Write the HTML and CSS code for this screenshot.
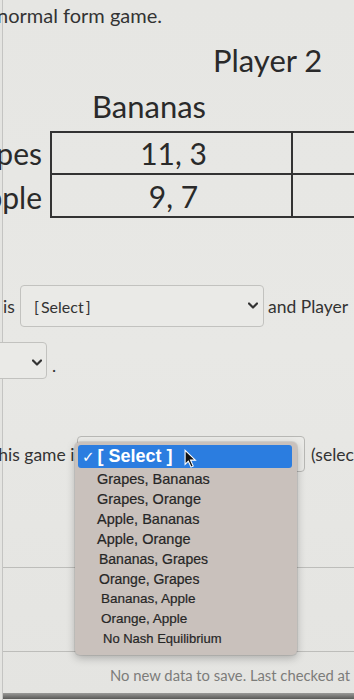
FILE: index.html
```html
<!DOCTYPE html>
<html>
<head>
<meta charset="utf-8">
<link rel="stylesheet" href="styles.css">
</head>
<body>
<div class="page">
  <p class="intro">normal form game.</p>
  <div class="player2">Player 2</div>
  <div class="colhead">Bananas</div>
  <div class="matrix">
    <div class="rlabel">Grapes</div>
    <div class="cell c1 top">11, 3</div>
    <div class="cell c2 top"></div>
    <div class="rlabel">Apple</div>
    <div class="cell c1">9, 7</div>
    <div class="cell c2"></div>
  </div>

  <div class="qrow q1">
    <span class="qtext">is</span>
    <div class="sel wide"><span>[ Select ]</span><svg class="chev" viewBox="0 0 10 6"><path d="M1 1 L5 5 L9 1" /></svg></div>
    <span class="qtext">and Player</span>
  </div>
  <div class="qrow q2">
    <div class="sel small"><svg class="chev" viewBox="0 0 10 6"><path d="M1 1 L5 5 L9 1" /></svg></div>
    <span class="qtext dot">.</span>
  </div>
  <div class="qrow q3">
    <span class="qtext clip">this game is</span>
    <div class="sel third">
      <div class="menu">
        <div class="hl"><span class="check">✓</span>[ Select ]</div>
        <ul class="opts">
          <li>Grapes, Bananas</li>
          <li>Grapes, Orange</li>
          <li>Apple, Bananas</li>
          <li>Apple, Orange</li>
          <li>Bananas, Grapes</li>
          <li>Orange, Grapes</li>
          <li>Bananas, Apple</li>
          <li>Orange, Apple</li>
          <li>No Nash Equilibrium</li>
        </ul>
        <svg class="cursor" viewBox="0 0 12 18"><path d="M1 1 L1 14 L4 11 L6.5 16.5 L8.5 15.5 L6 10 L10.5 10 Z" /></svg>
      </div>
    </div>
    <span class="qtext">(select</span>
  </div>
  <div class="rule r1"></div>
  <div class="rule r2"></div>
  <div class="status">No new data to save. Last checked at</div>
  <div class="bottomband"></div>
</div>
</body>
</html>
```
FILE: styles.css
```css
html, body {
  margin: 0;
  padding: 0;
}
body {
  width: 354px;
  height: 700px;
  overflow: hidden;
  background: #e4e4e1;
  font-family: Lato, "Open Sans", sans-serif;
  color: #2f2f2f;
}
.page {
  position: relative;
  height: 700px;
  border-left: 1px solid #c4c4c2;
  margin-left: 2px;
  background: linear-gradient(180deg, #e6e6e3 0%, #e8e8e5 50%, #e4e4e1 100%);
}
.intro {
  margin: 0;
  padding-top: 2px;
  height: 26px;
  line-height: 26px;
  font-size: 20px;
  margin-left: -6px;
  color: #333;
}
.player2 {
  margin-top: 14px;
  padding-left: 210px;
  height: 36px;
  line-height: 36px;
  font-size: 31px;
  color: #2a2a2a;
}
.colhead {
  margin-top: 10px;
  padding-left: 89px;
  height: 36px;
  line-height: 36px;
  font-size: 31px;
  color: #2a2a2a;
}
.matrix {
  margin-top: 7px;
  display: grid;
  grid-template-columns: 47px 241px 120px;
  grid-template-rows: 44px 43px;
}
.rlabel {
  display: flex;
  justify-content: flex-end;
  align-items: center;
  padding-right: 8px;
  font-size: 30px;
  white-space: nowrap;
  color: #2a2a2a;
  line-height: 1;
}
.cell {
  display: flex;
  align-items: center;
  justify-content: center;
  font-size: 30px;
  color: #2a2a2a;
  border-bottom: 2px solid #333;
  border-left: 2px solid #333;
}
.cell.top {
  border-top: 2px solid #333;
}
.c1 {
  padding-left: 4px;
}
.qrow {
  display: flex;
  align-items: center;
  white-space: nowrap;
}
.qtext {
  font-size: 17.5px;
  color: #333;
}
.q1 {
  margin-top: 67px;
  height: 42px;
}
.q1 .qtext:first-child {
  width: 17px;
}
.q1 .qtext:last-child {
  margin-left: 4px;
}
.sel {
  box-sizing: border-box;
  position: relative;
  border: 1px solid #c2c2bf;
  border-radius: 4px;
  background: #eaeae7;
  display: flex;
  align-items: center;
  flex-shrink: 0;
}
.sel.wide {
  width: 244px;
  height: 42px;
  padding-left: 13px;
  font-size: 16px;
  color: #333;
  word-spacing: -2px;
}
.chev {
  position: absolute;
  width: 10px;
  height: 7px;
  fill: none;
  stroke: #333;
  stroke-width: 2.2;
  stroke-linecap: round;
  stroke-linejoin: round;
}
.wide .chev {
  right: 5px;
  top: 16px;
}
.q2 {
  margin-top: 15px;
  height: 37px;
  margin-left: -60px;
}
.sel.small {
  width: 104px;
  height: 37px;
}
.small .chev {
  right: 4px;
  top: 16px;
}
.dot {
  margin-left: 5px;
  margin-top: 10px;
}
.q3 {
  margin-top: 57px;
  height: 36px;
  margin-left: -11px;
}
.clip {
  width: 85px;
}
.sel.third {
  width: 228px;
  height: 36px;
  border-color: #b8b8b5;
}
.q3 .qtext:last-child {
  margin-left: 6px;
}
.menu {
  position: absolute;
  left: -3px;
  top: 5px;
  width: 222px;
  box-sizing: border-box;
  padding: 3px 5px 6px 3px;
  background: #c9c1bc;
  border-radius: 5px;
  box-shadow: 0 3px 8px rgba(0, 0, 0, 0.25), 0 0 0 1px rgba(0, 0, 0, 0.08);
  z-index: 5;
}
.hl {
  height: 23px;
  line-height: 23px;
  background: #2b7de0;
  border-radius: 3px;
  color: #ffffff;
  font-family: "Liberation Sans", Arial, sans-serif;
  font-size: 18px;
  font-weight: bold;
  padding-left: 4px;
}
.check {
  font-family: "DejaVu Sans", sans-serif;
  font-size: 15px;
  margin-right: 3px;
}
.opts {
  list-style: none;
  margin: 0;
  padding: 1px 0 0 19px;
  font-family: "Liberation Sans", Arial, sans-serif;
  color: #262626;
}
.opts li {
  height: 20px;
  line-height: 20px;
  font-size: 14.5px;
  white-space: nowrap;
  -webkit-text-stroke: 0.2px #262626;
}
.opts li:nth-child(n+5) {
  font-size: 14px;
  padding-left: 2px;
}
.opts li:nth-child(n+7) {
  font-size: 13.5px;
  padding-left: 4px;
}
.opts li:nth-child(9) {
  font-size: 13px;
  padding-left: 6px;
}
.cursor {
  position: absolute;
  left: 109px;
  top: 7px;
  width: 13px;
  height: 20px;
  fill: #111;
  stroke: #fff;
  stroke-width: 1;
}
.rule {
  height: 1px;
  background: #bdbdba;
}
.r1 {
  margin-top: 95px;
}
.r2 {
  margin-top: 83px;
}
.status {
  height: 41px;
  line-height: 46px;
  padding-left: 107px;
  font-size: 14.8px;
  color: #7c7c7a;
  white-space: nowrap;
}
.bottomband {
  height: 6px;
  background: linear-gradient(180deg, #9a9a98, #5a5a58);
}
```
